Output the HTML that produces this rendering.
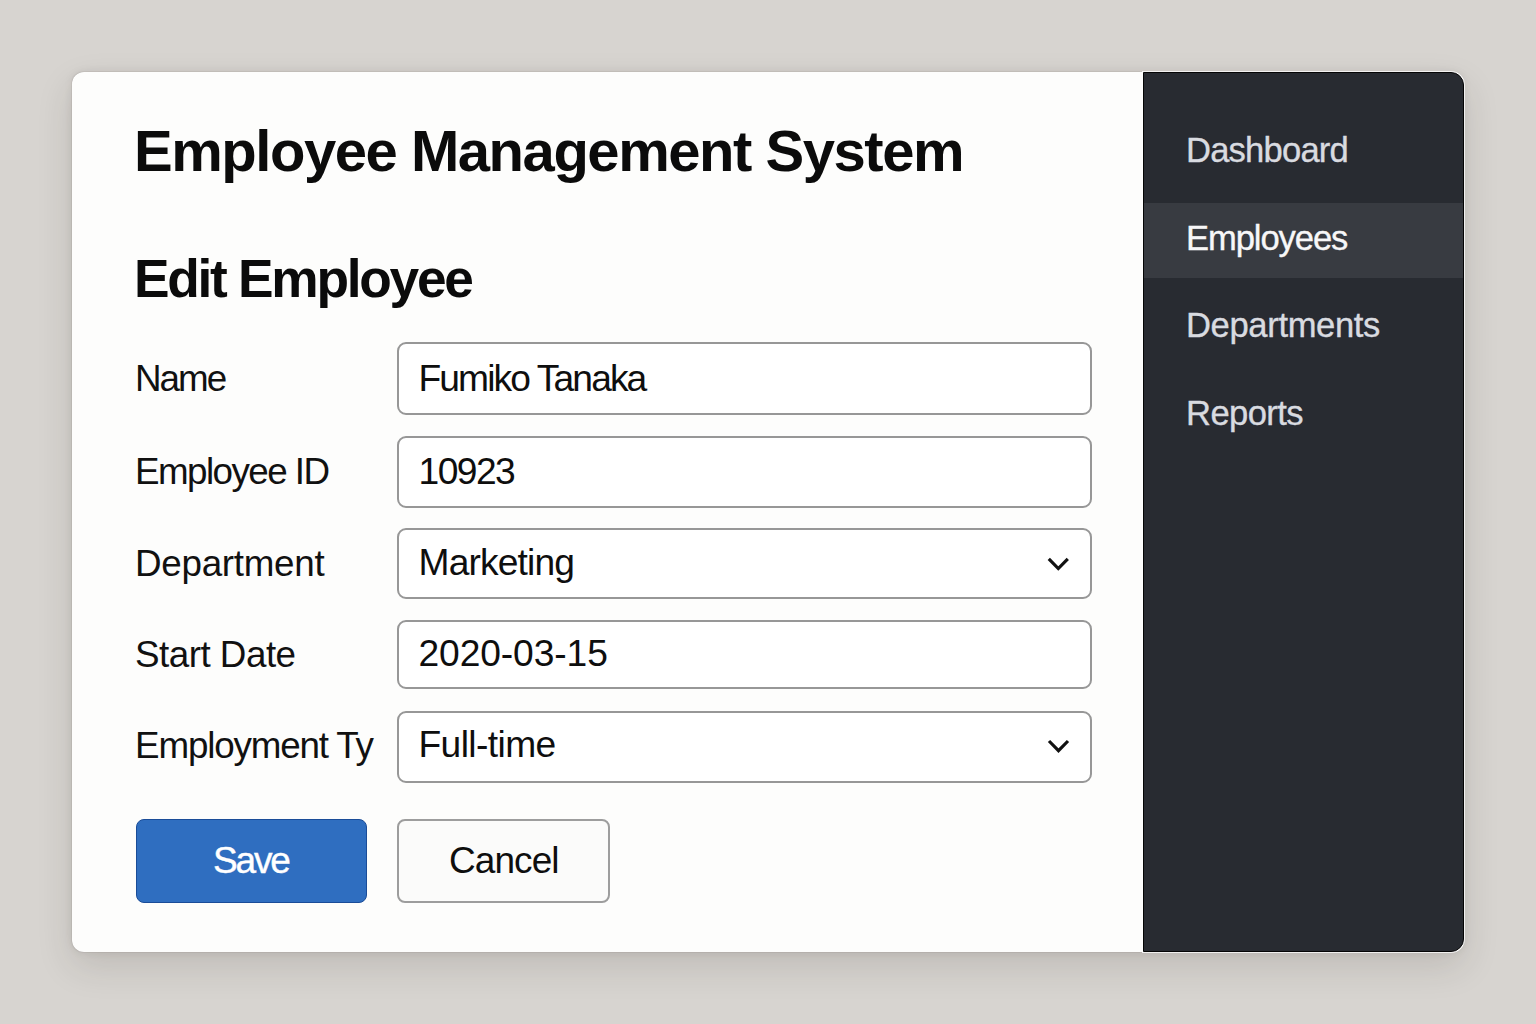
<!DOCTYPE html>
<html>
<head>
<meta charset="utf-8">
<style>
html,body{margin:0;padding:0;}
body{width:1536px;height:1024px;background:#d7d4d0;position:relative;overflow:hidden;font-family:"Liberation Sans",sans-serif;}
.card{position:absolute;left:72px;top:72px;width:1392px;height:880px;background:#fdfdfc;border-radius:12px;box-shadow:0 14px 36px rgba(40,35,30,0.14),0 0 10px rgba(40,35,30,0.07),0 0 1.5px rgba(0,0,0,0.28);}
.side{position:absolute;left:1143px;top:72px;width:321px;height:880px;box-sizing:border-box;border:1px solid #050505;background:#282b31;border-radius:0 13px 13px 0;overflow:hidden;box-shadow:0 0 0 1px rgba(255,255,255,0.8);}
.active{position:absolute;left:0;top:130px;width:321px;height:75px;background:#383b41;}
.t{position:absolute;white-space:nowrap;line-height:1;}
.title{left:134px;top:121.6px;font-size:58px;font-weight:bold;letter-spacing:-1.46px;color:#0b0b0b;}
.edit{left:134px;top:251.9px;font-size:53.3px;font-weight:bold;letter-spacing:-2.28px;color:#0b0b0b;}
.lbl{left:135px;font-size:36.8px;color:#111;}
.box{position:absolute;left:397px;width:695px;box-sizing:border-box;border:2px solid #979797;border-radius:9px;background:#fff;}
.val{left:418.5px;font-size:37.2px;color:#0e0e0e;}
.chev{position:absolute;left:0;top:0;}
.btn{position:absolute;top:819px;height:84px;box-sizing:border-box;border-radius:8px;}
.save{left:136px;width:231px;background:#2f6ec0;border:1px solid #1a4c98;}
.cancel{left:397px;width:213px;background:#fbfbfa;border:2px solid #9d9d9d;}
.bt{font-size:37px;top:842px;}
.nav{left:1186px;font-size:34.6px;color:#d9dbe0;-webkit-text-stroke:0.35px #d9dbe0;}
</style>
</head>
<body>
<div class="card"></div>
<div class="side"><div class="active"></div></div>

<div class="t title">Employee Management System</div>
<div class="t edit">Edit Employee</div>

<div class="t lbl" style="top:360.7px;letter-spacing:-1.97px">Name</div>
<div class="t lbl" style="top:454.3px;letter-spacing:-1.56px">Employee ID</div>
<div class="t lbl" style="top:546.2px;letter-spacing:-0.29px">Department</div>
<div class="t lbl" style="top:636.9px;letter-spacing:-0.51px">Start Date</div>
<div class="t lbl" style="top:727.8px;letter-spacing:-1.16px">Employment Ty</div>

<div class="box" style="top:342px;height:73px"></div>
<div class="box" style="top:436px;height:72px"></div>
<div class="box" style="top:528px;height:71px"></div>
<div class="box" style="top:620px;height:69px"></div>
<div class="box" style="top:711px;height:72px"></div>

<div class="t val" style="top:359.5px;letter-spacing:-1.89px">Fumiko Tanaka</div>
<div class="t val" style="top:452.5px;letter-spacing:-1.55px">10923</div>
<div class="t val" style="top:544.4px;letter-spacing:-0.84px">Marketing</div>
<div class="t val" style="top:634.8px;letter-spacing:-0.10px">2020-03-15</div>
<div class="t val" style="top:726.4px;letter-spacing:-0.61px">Full-time</div>

<svg class="chev" width="1536" height="1024" viewBox="0 0 1536 1024">
<path d="M1048.8 558.8 L1058.3 568.5 L1067.8 558.8" fill="none" stroke="#111" stroke-width="3.2"/>
<path d="M1049 741 L1058.5 750.7 L1068 741" fill="none" stroke="#111" stroke-width="3.2"/>
</svg>

<div class="btn save"></div>
<div class="btn cancel"></div>
<div class="t bt" style="left:213px;color:#fff;letter-spacing:-2.17px;-webkit-text-stroke:0.4px #fff">Save</div>
<div class="t bt" style="left:449px;color:#0e0e0e;letter-spacing:-0.92px">Cancel</div>

<div class="t nav" style="top:132.7px;letter-spacing:-0.8px">Dashboard</div>
<div class="t nav" style="top:221px;letter-spacing:-1.09px;color:#f7f7f8;-webkit-text-stroke:0.35px #f7f7f8">Employees</div>
<div class="t nav" style="top:308.4px;letter-spacing:-0.36px">Departments</div>
<div class="t nav" style="top:395.9px;letter-spacing:-0.58px">Reports</div>
</body>
</html>
